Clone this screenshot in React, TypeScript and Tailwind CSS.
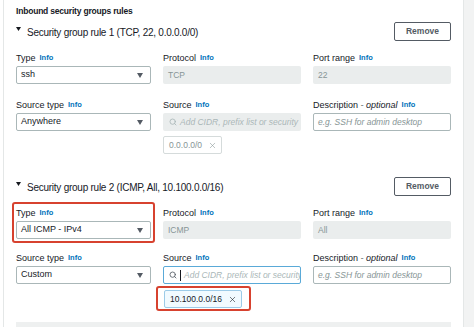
import React from "react";
import { Search, X } from "lucide-react";

const font = { fontFamily: '"Liberation Sans", Arial, sans-serif' };

function Caret() {
  return (
    <svg width="6" height="5" viewBox="0 0 6 5" className="shrink-0">
      <path d="M0 0h6L3 5z" fill="#545b64" />
    </svg>
  );
}

function Label({ text, optional }: { text: string; optional?: boolean }) {
  return (
    <div className="h-[12px] flex items-center gap-[4px] text-[9px] text-[#16191f] leading-none">
      <span>
        {text}
        {optional && <i> - optional</i>}
      </span>
      <span className="text-[7.5px] font-bold text-[#0073bb]">Info</span>
    </div>
  );
}

function Select({ value }: { value: string }) {
  return (
    <div className="mt-[2px] h-[18px] flex items-center justify-between border border-[#aab7b8] rounded-[2px] bg-white pl-[4px] pr-[7px] text-[9px] text-[#16191f]">
      <span>{value}</span>
      <Caret />
    </div>
  );
}

function Disabled({ value }: { value: string }) {
  return (
    <div className="mt-[2px] h-[18px] flex items-center rounded-[2px] bg-[#eaeded] pl-[5px] text-[8.5px] text-[#879596]">
      {value}
    </div>
  );
}

function Description() {
  return (
    <div className="mt-[2px] h-[18px] flex items-center border border-[#aab7b8] rounded-[2px] bg-white pl-[4px] text-[8.5px] italic text-[#879596]">
      e.g. SSH for admin desktop
    </div>
  );
}

function SourceInput({ active }: { active?: boolean }) {
  return (
    <div
      className={
        active
          ? "mt-[2px] h-[18px] flex items-center gap-[3px] border border-[#5aaad8] rounded-[2px] bg-white pl-[5px] text-[8.5px] italic text-[#aab7b8] overflow-hidden whitespace-nowrap"
          : "mt-[2px] h-[18px] flex items-center gap-[3px] rounded-[2px] bg-[#eaeded] pl-[6px] text-[8.5px] italic text-[#aab7b8] overflow-hidden whitespace-nowrap"
      }
    >
      <Search size={8} strokeWidth={2.5} color={active ? "#545b64" : "#aab7b8"} className="shrink-0" />
      {active && <span className="w-px h-[11px] bg-[#16191f] shrink-0" />}
      <span>Add CIDR, prefix list or security</span>
    </div>
  );
}

function RuleHeader({ title }: { title: string }) {
  return (
    <div className="h-[19px] flex items-center justify-between">
      <div className="flex items-start gap-[6px]">
        <svg width="5" height="4" viewBox="0 0 5 4" className="mt-[1px]">
          <path d="M0 0h5L2.5 4z" fill="#16191f" />
        </svg>
        <span className="text-[10px] tracking-[-0.25px] text-[#16191f] leading-none pt-[2px]">{title}</span>
      </div>
      <button className="w-[57px] h-[19px] border border-[#545b64] rounded-[2px] bg-white text-[8.5px] font-bold text-[#545b64]">
        Remove
      </button>
    </div>
  );
}

export default function App() {
  return (
    <div className="flex w-[474px] h-[327px] overflow-hidden bg-[#f2f3f3]" style={font}>
      <div className="w-[3px] bg-white" />
      <div className="w-[461px] border-x border-[#e4e7e7] bg-white px-[12px]">
        <div className="h-[22px] flex items-center text-[8.5px] font-bold tracking-[-0.2px] text-[#16191f]">
          Inbound security groups rules
        </div>

        <RuleHeader title="Security group rule 1 (TCP, 22, 0.0.0.0/0)" />

        <div className="mt-[11px] grid grid-cols-[135px_138px_138px] gap-x-[12px]">
          <div>
            <Label text="Type" />
            <Select value="ssh" />
          </div>
          <div>
            <Label text="Protocol" />
            <Disabled value="TCP" />
          </div>
          <div>
            <Label text="Port range" />
            <Disabled value="22" />
          </div>
        </div>

        <div className="mt-[15px] grid grid-cols-[135px_138px_138px] gap-x-[12px]">
          <div>
            <Label text="Source type" />
            <Select value="Anywhere" />
          </div>
          <div>
            <Label text="Source" />
            <SourceInput />
            <div className="mt-[5px] w-[59px] h-[18px] flex items-center justify-between border border-[#d5dbdb] rounded-[2px] pl-[5px] pr-[4px] text-[8.5px] text-[#879596]">
              <span>0.0.0.0/0</span>
              <X size={9} strokeWidth={1.5} color="#879596" />
            </div>
          </div>
          <div>
            <Label text="Description" optional />
            <Description />
          </div>
        </div>

        <div className="mt-[23px]">
          <RuleHeader title="Security group rule 2 (ICMP, All, 10.100.0.0/16)" />
        </div>

        <div className="mt-[11px] grid grid-cols-[135px_138px_138px] gap-x-[12px]">
          <div className="relative">
            <Label text="Type" />
            <Select value="All ICMP - IPv4" />
            <div className="absolute -left-[4px] -right-[4px] -top-[5px] -bottom-[4px] border-2 border-[#d7422f] rounded-[3px] pointer-events-none" />
          </div>
          <div>
            <Label text="Protocol" />
            <Disabled value="ICMP" />
          </div>
          <div>
            <Label text="Port range" />
            <Disabled value="All" />
          </div>
        </div>

        <div className="mt-[13px] grid grid-cols-[135px_138px_138px] gap-x-[12px]">
          <div>
            <Label text="Source type" />
            <Select value="Custom" />
          </div>
          <div>
            <Label text="Source" />
            <SourceInput active />
            <div className="relative mt-[6px] ml-px w-[78px] h-[18px] flex items-center justify-between border border-[#9ccbe8] bg-[#f1faff] rounded-[2px] pl-[5px] pr-[4px] text-[8.5px] text-[#16191f]">
              <span>10.100.0.0/16</span>
              <X size={9} strokeWidth={1.5} color="#16191f" />
              <div className="absolute -left-[9px] -right-[10px] -top-[5px] -bottom-[4px] border-2 border-[#d7422f] rounded-[3px] pointer-events-none" />
            </div>
          </div>
          <div>
            <Label text="Description" optional />
            <Description />
          </div>
        </div>

        <div className="mt-[14px] h-[6px] bg-[#eef0f0]" />
      </div>
    </div>
  );
}
